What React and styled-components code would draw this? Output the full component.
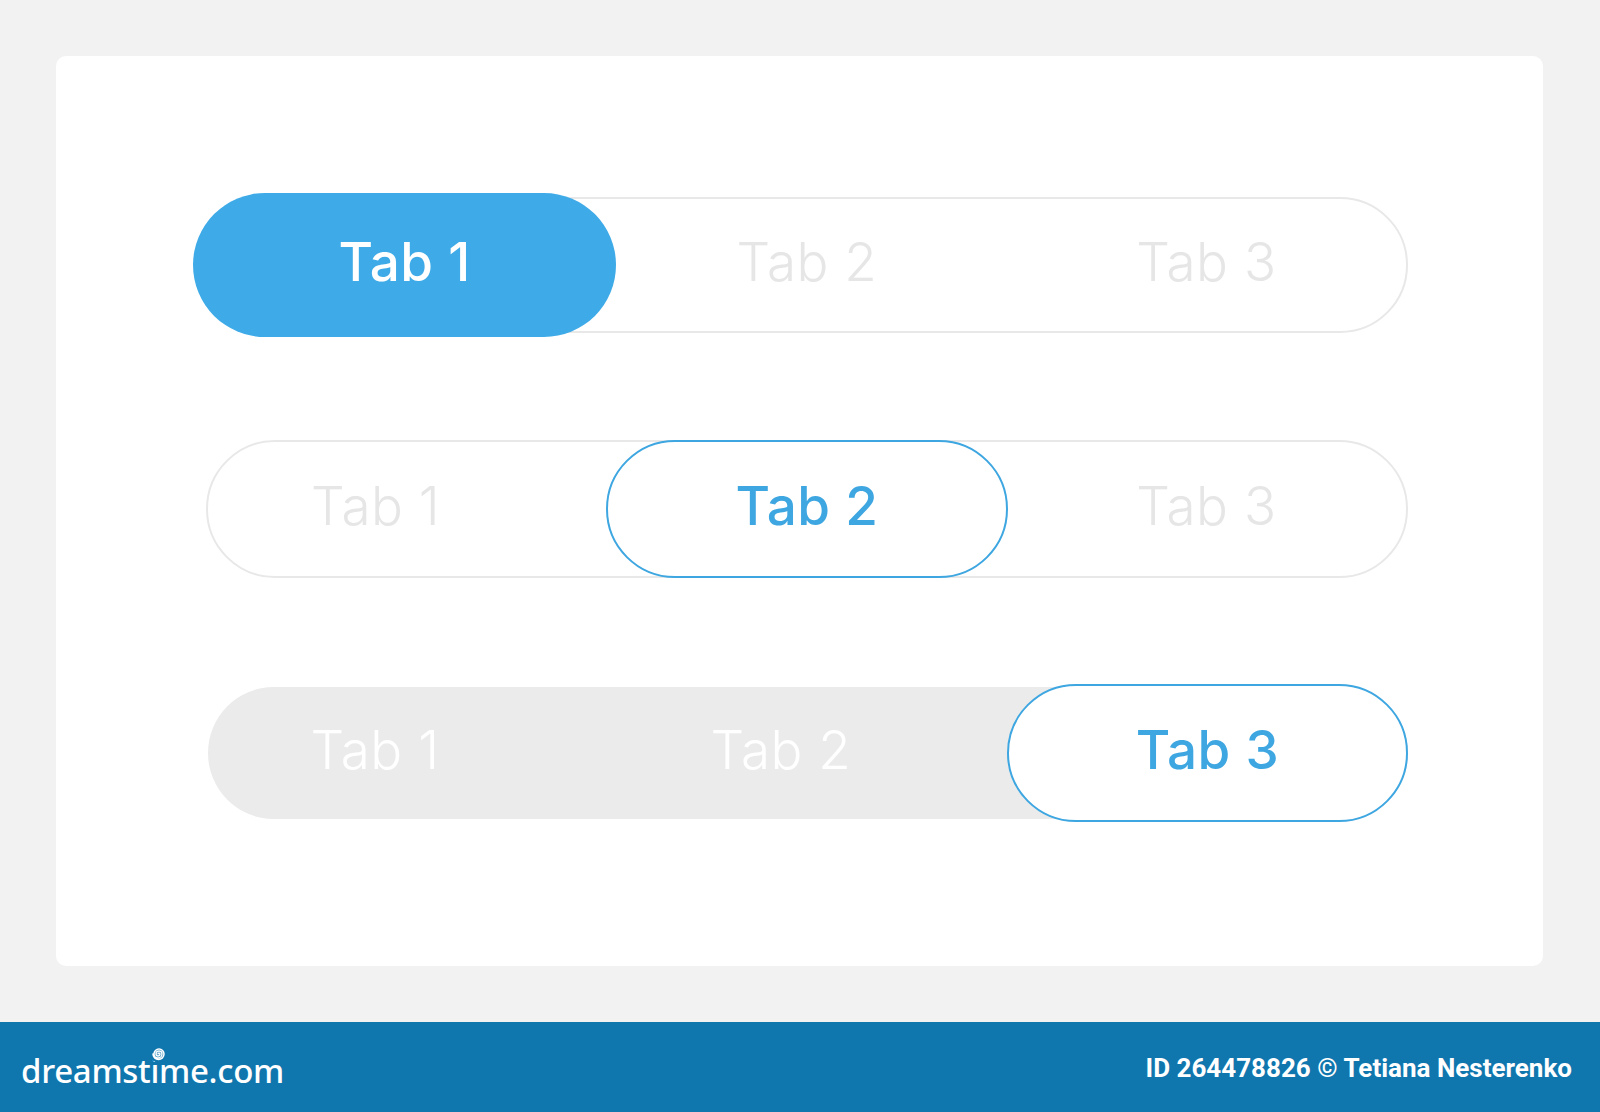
import React from "react";
import styled, { createGlobalStyle, css } from "styled-components";

const GlobalStyle = createGlobalStyle`
	html, body {
		margin: 0;
		padding: 0;
		background: #f2f2f2;
	}
	* {
		box-sizing: border-box;
	}
`;

const Page = styled.div`
	width: 1600px;
	height: 1112px;
	display: flex;
	flex-direction: column;
	background: #f2f2f2;
`;

const Stage = styled.div`
	flex: 1;
	padding: 56px 57px 56px 56px;
`;

const Card = styled.div`
	height: 100%;
	background: #ffffff;
	border-radius: 10px;
	padding: 137px 0 0 150px;
	display: flex;
	flex-direction: column;
	gap: 100px;
`;

const Row = styled.div`
	width: 1202px;
	height: 144px;
	display: flex;
	align-items: center;
`;

const Track = styled.div`
	display: grid;
	grid-template-columns: repeat(3, 1fr);
	border-radius: 999px;
	height: ${(props) => props.h}px;
	${(props) =>
		props.variant === "filled"
			? css`
					width: 1200px;
					margin-left: 2px;
					background: #ebebeb;
			  `
			: css`
					width: 1202px;
					border: 2px solid #e8e8e8;
					background: #ffffff;
			  `}
`;

const Tab = styled.div`
	display: flex;
	align-items: center;
	justify-content: center;
	border-radius: 999px;
	font-family: Inter, "Noto Sans", sans-serif;
	font-size: 53px;
	letter-spacing: 0.5px;
	font-weight: 300;
	color: ${(props) => (props.light ? "#ffffff" : "#e6e6e6")};
	white-space: nowrap;

	span {
		transform: translate(${(props) => props.shift || 0}px, -3px);
	}

	${(props) =>
		props.active === "solid" &&
		css`
			margin: -6px -9px -6px -15px;
			background: #3eabe8;
			color: #ffffff;
			font-weight: 500;
		`}

	${(props) =>
		props.active === "outline" &&
		css`
			margin: ${props.edge};
			background: #ffffff;
			border: 2px solid #3ea6e0;
			color: #3ea6e0;
			font-weight: 500;
		`}
`;

const Footer = styled.div`
	height: 90px;
	background: #1076ae;
	display: flex;
	align-items: center;
	justify-content: space-between;
	padding: 0 28px 0 21px;
`;

const Logo = styled.div`
	position: relative;
	font-family: "Noto Sans", sans-serif;
	font-size: 33px;
	font-weight: 500;
	letter-spacing: -0.3px;
	color: #ffffff;
	line-height: 1;
	padding-top: 6px;
`;

/* spiral mark that replaces the dot of the "i" in the wordmark */
const Swirl = styled.svg`
	position: absolute;
	left: 129px;
	top: -2px;
`;

const Credit = styled.div`
	font-family: Roboto, "Liberation Sans", sans-serif;
	font-size: 26px;
	font-weight: 700;
	color: #ffffff;
	padding-top: 2px;
`;

const rows = [
	{
		variant: "outline",
		h: 136,
		tabs: [
			{ label: "Tab 1", active: "solid" },
			{ label: "Tab 2" },
			{ label: "Tab 3" },
		],
	},
	{
		variant: "outline",
		h: 138,
		tabs: [
			{ label: "Tab 1", shift: -32 },
			{ label: "Tab 2", active: "outline", edge: "-2px -1px" },
			{ label: "Tab 3" },
		],
	},
	{
		variant: "filled",
		h: 132,
		tabs: [
			{ label: "Tab 1", shift: -33, light: true },
			{ label: "Tab 2", shift: -27, light: true },
			{ label: "Tab 3", active: "outline", edge: "-3px 0 -3px -1px" },
		],
	},
];

const App = () => {
	return (
		<Page>
			<GlobalStyle />
			<Stage>
				<Card>
					{rows.map((row, i) => (
						<Row key={i}>
							<Track variant={row.variant} h={row.h}>
								{row.tabs.map((t) => (
									<Tab
										key={t.label}
										active={t.active}
										edge={t.edge}
										shift={t.shift}
										light={t.light}
									>
										<span>{t.label}</span>
									</Tab>
								))}
							</Track>
						</Row>
					))}
				</Card>
			</Stage>
			<Footer>
				<Logo>
					dreamstime.com
					<Swirl width="17" height="17" viewBox="0 0 17 17">
						<circle cx="8.5" cy="8.5" r="8" fill="#1076ae" />
						<path
							d="M8 8a1 1 0 0 1 2 0a2 2 0 0 1 -4 0a3 3 0 0 1 6 0a4 4 0 0 1 -8 0a5 5 0 0 1 10 0a5.5 5.5 0 0 1 -11 0"
							fill="none"
							stroke="#ffffff"
							strokeWidth="1.5"
							strokeLinecap="round"
						/>
					</Swirl>
				</Logo>
				<Credit>ID 264478826 © Tetiana Nesterenko</Credit>
			</Footer>
		</Page>
	);
};

export default App;
